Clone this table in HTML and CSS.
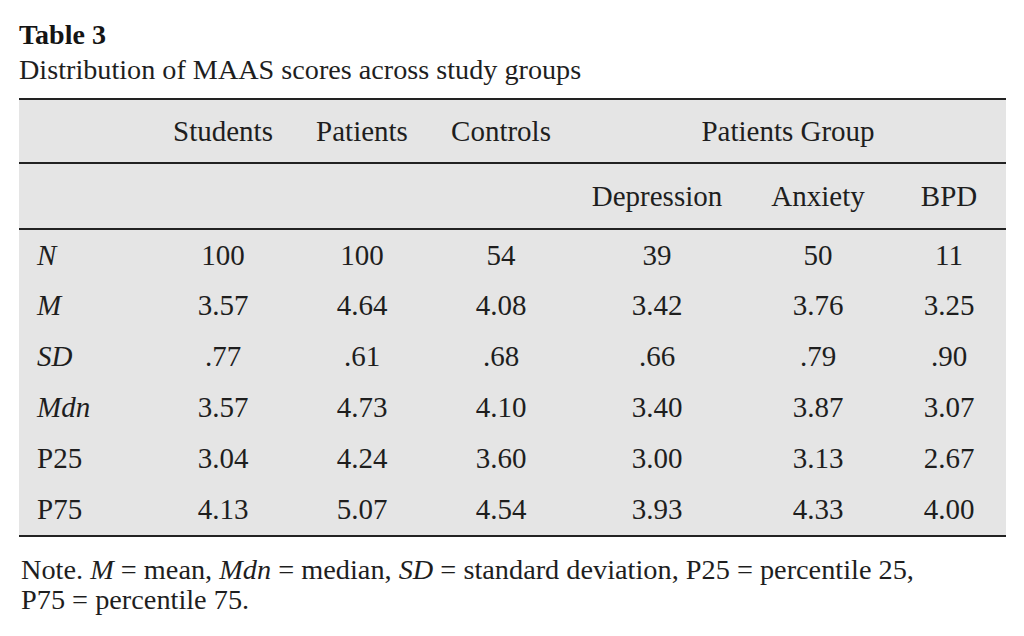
FILE: index.html
```html
<!DOCTYPE html>
<html>
<head>
<meta charset="utf-8">
<link rel="stylesheet" href="styles.css">
</head>
<body>
<div class="page">
  <div class="title">Table 3</div>
  <div class="subtitle">Distribution of MAAS scores across study groups</div>
  <table class="data">
    <colgroup>
      <col class="c-label">
      <col class="c-stu">
      <col class="c-pat">
      <col class="c-con">
      <col class="c-dep">
      <col class="c-anx">
      <col class="c-bpd">
    </colgroup>
    <thead>
      <tr class="h1">
        <th></th>
        <th>Students</th>
        <th>Patients</th>
        <th>Controls</th>
        <th colspan="3">Patients Group</th>
      </tr>
      <tr class="h2">
        <th></th>
        <th></th>
        <th></th>
        <th></th>
        <th>Depression</th>
        <th>Anxiety</th>
        <th>BPD</th>
      </tr>
    </thead>
    <tbody>
      <tr><td class="lbl"><i>N</i></td><td>100</td><td>100</td><td>54</td><td>39</td><td>50</td><td>11</td></tr>
      <tr><td class="lbl"><i>M</i></td><td>3.57</td><td>4.64</td><td>4.08</td><td>3.42</td><td>3.76</td><td>3.25</td></tr>
      <tr><td class="lbl"><i>SD</i></td><td>.77</td><td>.61</td><td>.68</td><td>.66</td><td>.79</td><td>.90</td></tr>
      <tr><td class="lbl"><i>Mdn</i></td><td>3.57</td><td>4.73</td><td>4.10</td><td>3.40</td><td>3.87</td><td>3.07</td></tr>
      <tr><td class="lbl">P25</td><td>3.04</td><td>4.24</td><td>3.60</td><td>3.00</td><td>3.13</td><td>2.67</td></tr>
      <tr><td class="lbl">P75</td><td>4.13</td><td>5.07</td><td>4.54</td><td>3.93</td><td>4.33</td><td>4.00</td></tr>
    </tbody>
  </table>
  <p class="note">Note. <i>M</i> = mean, <i>Mdn</i> = median, <i>SD</i> = standard deviation, P25 = percentile 25,<br>P75 = percentile 75.</p>
</div>
</body>
</html>
```

FILE: styles.css
```css
html, body {
  margin: 0;
  padding: 0;
  background: #ffffff;
}

body {
  font-family: "Liberation Serif", "Times New Roman", serif;
  color: #1e1e1e;
}

.page {
  padding: 18px 18px 0 19px;
}

.title {
  font-weight: bold;
  font-size: 28px;
  line-height: 34px;
  color: #141414;
}

.subtitle {
  font-size: 28.2px;
  line-height: 36px;
  margin-bottom: 10px;
}

.data {
  width: 987px;
  border-collapse: collapse;
  table-layout: fixed;
  background: #e5e5e5;
  border-top: 2px solid #222;
  border-bottom: 2px solid #222;
  font-size: 29px;
}

.c-label { width: 135px; }
.c-stu { width: 138px; }
.c-pat { width: 140px; }
.c-con { width: 138px; }
.c-dep { width: 174px; }
.c-anx { width: 148px; }
.c-bpd { width: 114px; }

.data th {
  font-weight: normal;
  text-align: center;
  padding: 0;
}

.data tr.h1 th {
  height: 62px;
  border-bottom: 2px solid #222;
}

.data tr.h2 th {
  height: 64px;
  border-bottom: 2px solid #222;
}

.data td {
  text-align: center;
  height: 51px;
  padding: 0;
}

.data tbody tr:first-child td {
  height: 50px;
}

.data td.lbl {
  text-align: left;
  padding-left: 18px;
}

.note {
  margin: 18px 0 0 2px;
  font-size: 28.3px;
  line-height: 30px;
}
```
